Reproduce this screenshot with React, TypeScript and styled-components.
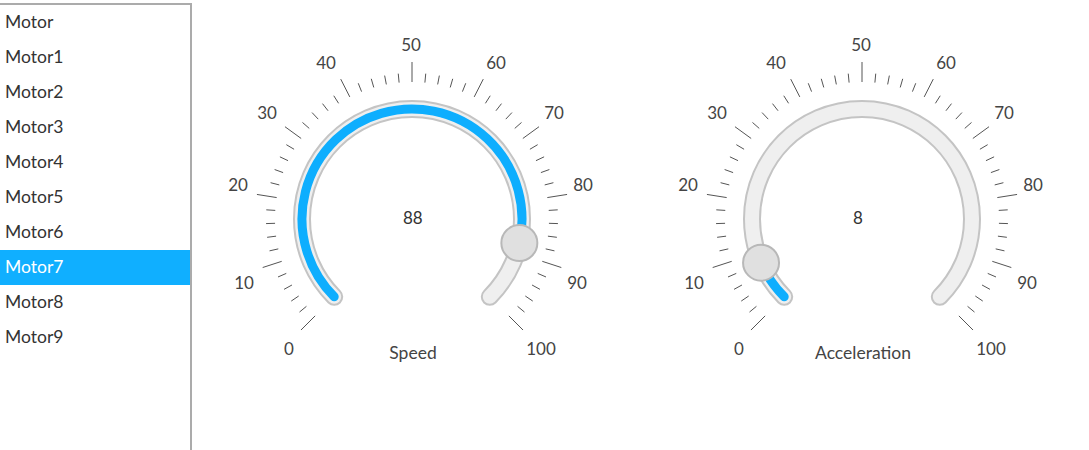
import { createGlobalStyle } from "styled-components";
import styled from "styled-components";

const GlobalStyle = createGlobalStyle`
  html, body {
    margin: 0;
    padding: 0;
    background: #ffffff;
    font-family: Lato, "Open Sans", sans-serif;
  }
`;

const motors = [
  "Motor",
  "Motor1",
  "Motor2",
  "Motor3",
  "Motor4",
  "Motor5",
  "Motor6",
  "Motor7",
  "Motor8",
  "Motor9",
];

const labelOffsets: [number, number][] = [
  [-123, 130],
  [-168, 64],
  [-174, -34],
  [-145, -106],
  [-86, -156],
  [-1, -174],
  [84, -156],
  [142, -106],
  [171, -34],
  [165, 64],
  [129, 130],
];

const CX = 220;
const CY = 219;
const TRACK_R = 110;
const START = -135;
const SWEEP = 270;

function point(angle: number, r: number) {
  const rad = (angle * Math.PI) / 180;
  return [CX + r * Math.sin(rad), CY - r * Math.cos(rad)];
}

function arcPath(from: number, to: number, r: number) {
  const [x1, y1] = point(from, r);
  const [x2, y2] = point(to, r);
  const large = to - from > 180 ? 1 : 0;
  return `M ${x1} ${y1} A ${r} ${r} 0 ${large} 1 ${x2} ${y2}`;
}

interface GaugeProps {
  value: number;
  title: string;
}

function Gauge({ value, title }: GaugeProps) {
  const valueAngle = START + (SWEEP * value) / 100;
  const [hx, hy] = point(valueAngle, TRACK_R);

  const ticks = [];
  for (let i = 0; i <= 50; i++) {
    const major = i % 5 === 0;
    const a = START + (SWEEP * i) / 50;
    const [x1, y1] = point(a, 137);
    const [x2, y2] = point(a, major ? 157 : 146);
    ticks.push(
      <line key={i} x1={x1} y1={y1} x2={x2} y2={y2} stroke="#555" strokeWidth={1} />
    );
  }

  return (
    <GaugeSvg viewBox="0 0 450 370">
      {ticks}
      {labelOffsets.map(([dx, dy], i) => (
        <ScaleLabel key={i} x={CX + dx} y={CY + dy - 1}>
          {i * 10}
        </ScaleLabel>
      ))}
      <path
        d={arcPath(START, START + SWEEP, TRACK_R)}
        fill="none"
        stroke="#c4c4c4"
        strokeWidth={18}
        strokeLinecap="round"
      />
      <path
        d={arcPath(START, START + SWEEP, TRACK_R)}
        fill="none"
        stroke="#efefef"
        strokeWidth={14}
        strokeLinecap="round"
      />
      <path
        d={arcPath(START, valueAngle, TRACK_R)}
        fill="none"
        stroke="#0eaefe"
        strokeWidth={9}
        strokeLinecap="round"
      />
      <circle cx={hx} cy={hy} r={18} fill="#e0e0e0" stroke="#b8b8b8" strokeWidth={2} />
      <ValueText x={CX - 9} y={CY - 2}>
        {value}
      </ValueText>
      <TitleText x={CX + 1} y={CY + 133}>
        {title}
      </TitleText>
    </GaugeSvg>
  );
}

export default function App() {
  return (
    <Page>
      <GlobalStyle />
      <MotorList>
        {motors.map((m) => (
          <MotorItem key={m} $selected={m === "Motor7"}>
            {m}
          </MotorItem>
        ))}
      </MotorList>
      <GaugeRow>
        <Gauge value={88} title="Speed" />
        <Gauge value={8} title="Acceleration" />
      </GaugeRow>
    </Page>
  );
}

const Page = styled.div`
  display: flex;
  width: 1089px;
  height: 450px;
  overflow: hidden;
`;

const MotorList = styled.ul`
  list-style: none;
  margin: 3px 0 0 0;
  padding: 0;
  width: 190px;
  height: 460px;
  flex-shrink: 0;
  border-top: 2px solid #ababab;
  border-right: 2px solid #ababab;
`;

const MotorItem = styled.li<{ $selected?: boolean }>`
  height: 35px;
  line-height: 34px;
  padding-left: 5px;
  font-size: 17.5px;
  color: ${(p) => (p.$selected ? "#ffffff" : "#333333")};
  background: ${(p) => (p.$selected ? "#10afff" : "transparent")};
`;

const GaugeRow = styled.div`
  display: flex;
  align-items: flex-start;
`;

const GaugeSvg = styled.svg`
  width: 450px;
  height: 370px;
  display: block;
  flex-shrink: 0;
`;

const ScaleLabel = styled.text`
  font-family: Lato, "Open Sans", sans-serif;
  font-size: 17px;
  fill: #444444;
  text-anchor: middle;
  dominant-baseline: central;
`;

const ValueText = styled.text`
  font-family: Lato, "Open Sans", sans-serif;
  font-size: 17px;
  fill: #333333;
  dominant-baseline: central;
`;

const TitleText = styled.text`
  font-family: Lato, "Open Sans", sans-serif;
  font-size: 17.5px;
  fill: #444444;
  text-anchor: middle;
  dominant-baseline: central;
`;
